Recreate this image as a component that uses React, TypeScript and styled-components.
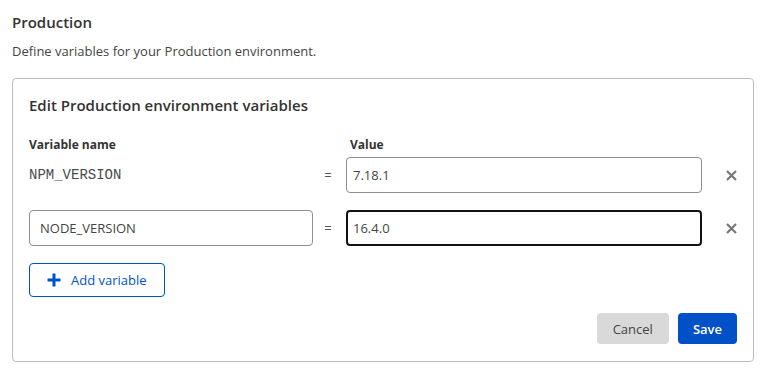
import React from "react";
import styled, { createGlobalStyle } from "styled-components";

const Global = createGlobalStyle`
  html, body { margin: 0; padding: 0; background: #fff; }
  body { font-family: "Open Sans", "Noto Sans", sans-serif; color: #333; }
  * { box-sizing: border-box; }
`;

const Page = styled.div`
  width: 764px;
  padding: 12px 10px 0 12px;
`;

const Heading = styled.h2`
  margin: 0;
  font-size: 15px;
  font-weight: 600;
  line-height: 20px;
  color: #333;
`;

const Subtitle = styled.p`
  margin: 10px 0 0;
  font-size: 13px;
  line-height: 18px;
  color: #444;
`;

const Card = styled.section`
  margin-top: 18px;
  border: 1px solid #bdbdbd;
  border-radius: 4px;
  padding: 16px 16px 17px 16px;
`;

const CardTitle = styled.h3`
  margin: 0;
  font-size: 15px;
  font-weight: 600;
  line-height: 20px;
  color: #333;
`;

const Grid = styled.div`
  margin-top: 22px;
  display: grid;
  grid-template-columns: 284px 33px 356px 1fr;
  row-gap: 17px;
  align-items: center;
`;

const HeaderRow = styled.div`
  display: contents;
`;

const Label = styled.div<{ $col: number }>`
  grid-column: ${(p) => p.$col};
  font-size: 12px;
  font-weight: 700;
  line-height: 16px;
  color: #333;
  padding-left: ${(p) => (p.$col === 3 ? "4px" : "0")};
  margin-bottom: -13px;
`;

const NameText = styled.div`
  grid-column: 1;
  font-family: "Liberation Mono", monospace;
  font-size: 14px;
  color: #4a4a4a;
`;

const Eq = styled.div`
  text-align: center;
  font-size: 13px;
  color: #555;
  padding-right: 3px;
`;

const Input = styled.input<{ $focused?: boolean; $pad: number }>`
  width: 100%;
  height: 36px;
  font-family: "Open Sans", "Noto Sans", sans-serif;
  font-size: 13px;
  color: #444;
  padding: 0 8px 0 ${(p) => p.$pad}px;
  border: ${(p) => (p.$focused ? "2px solid #111" : "1px solid #8f8f8f")};
  border-radius: 4px;
  outline: none;
  background: #fff;
`;

const Remove = styled.button`
  justify-self: end;
  background: none;
  border: none;
  padding: 0;
  width: 12px;
  height: 12px;
  display: flex;
  align-items: center;
  justify-content: center;
  cursor: pointer;
`;

const AddButton = styled.button`
  margin-top: 17px;
  height: 34px;
  width: 136px;
  display: flex;
  align-items: center;
  gap: 10px;
  padding: 0 0 0 17px;
  border: 1px solid #0052cc;
  border-radius: 4px;
  background: #fff;
  color: #0052cc;
  font-family: "Open Sans", "Noto Sans", sans-serif;
  font-size: 13px;
  cursor: pointer;
`;

const Footer = styled.div`
  margin-top: 16px;
  display: flex;
  justify-content: flex-end;
  gap: 9px;
`;

const Btn = styled.button<{ $primary?: boolean }>`
  height: 31px;
  padding: 0 ${(p) => (p.$primary ? "15px" : "16px")};
  border: none;
  border-radius: 4px;
  font-family: "Open Sans", "Noto Sans", sans-serif;
  font-size: 13px;
  font-weight: ${(p) => (p.$primary ? 600 : 400)};
  background: ${(p) => (p.$primary ? "#0050c8" : "#d9d9d9")};
  color: ${(p) => (p.$primary ? "#fff" : "#444")};
  cursor: pointer;
`;

const XIcon = () => (
  <svg width="11" height="11" viewBox="0 0 11 11">
    <path d="M1 1L10 10M10 1L1 10" stroke="#777" strokeWidth="2.2" strokeLinecap="butt" />
  </svg>
);

const PlusIcon = () => (
  <svg width="14" height="14" viewBox="0 0 14 14">
    <path d="M7 0.5V13.5M0.5 7H13.5" stroke="#0052cc" strokeWidth="3" />
  </svg>
);

export default function App() {
  return (
    <>
      <Global />
      <Page>
        <Heading>Production</Heading>
        <Subtitle>Define variables for your Production environment.</Subtitle>
        <Card>
          <CardTitle>Edit Production environment variables</CardTitle>
          <Grid>
            <HeaderRow>
              <Label $col={1}>Variable name</Label>
              <Label $col={3}>Value</Label>
            </HeaderRow>
            <NameText>NPM_VERSION</NameText>
            <Eq>=</Eq>
            <Input $pad={6} defaultValue="7.18.1" />
            <Remove aria-label="Remove"><XIcon /></Remove>
            <Input $pad={10} defaultValue="NODE_VERSION" />
            <Eq>=</Eq>
            <Input $pad={5} $focused defaultValue="16.4.0" />
            <Remove aria-label="Remove"><XIcon /></Remove>
          </Grid>
          <AddButton><PlusIcon />Add variable</AddButton>
          <Footer>
            <Btn>Cancel</Btn>
            <Btn $primary>Save</Btn>
          </Footer>
        </Card>
      </Page>
    </>
  );
}
